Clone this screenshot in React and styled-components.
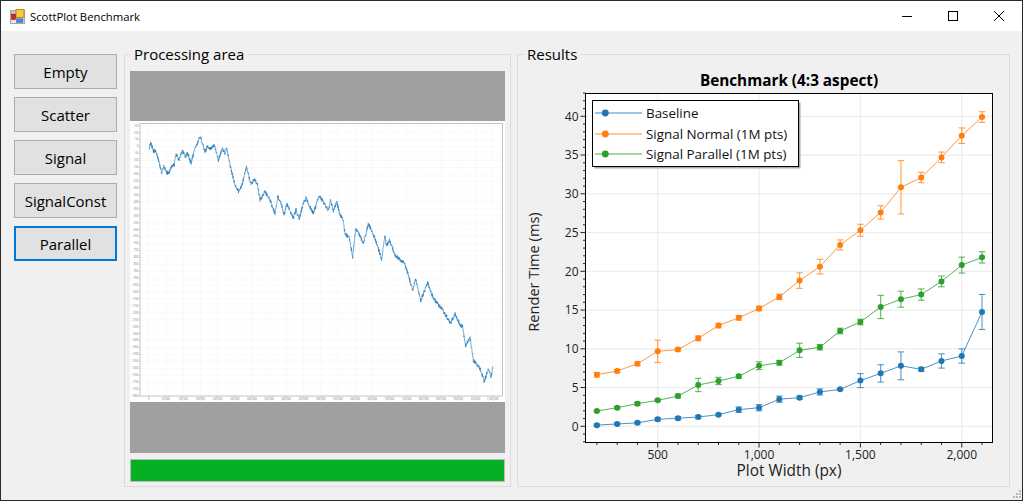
import React from 'react';
import styled, { createGlobalStyle } from 'styled-components';

const FONT = '"Open Sans", "Noto Sans", "Liberation Sans", sans-serif';

const GlobalStyle = createGlobalStyle`
  html, body {
    margin: 0;
    padding: 0;
    background: #f0f0f0;
  }
  body {
    font-family: ${FONT};
  }
`;

const Window = styled.div`
  position: relative;
  box-sizing: border-box;
  width: 1023px;
  height: 501px;
  border: 1px solid #2b2b2b;
  background: #f0f0f0;
  overflow: hidden;
`;

const TitleBar = styled.header`
  display: flex;
  align-items: center;
  height: 30px;
  padding-left: 9px;
  background: #fff;
`;

const AppIcon = styled.svg`
  width: 15px;
  height: 15px;
  margin-right: 5px;
`;

const WindowTitle = styled.span`
  flex: 1;
  font-size: 11.3px;
  color: #000;
`;

const CaptionButton = styled.div`
  display: flex;
  align-items: center;
  justify-content: center;
  width: 46px;
  height: 30px;
`;

const Body = styled.main`
  display: flex;
  align-items: flex-start;
  padding: 12px 0 0 13px;
`;

const Sidebar = styled.nav`
  display: flex;
  flex-direction: column;
  gap: 8px;
  width: 103px;
  margin: 11px 7px 0 0;
`;

const Button = styled.button`
  box-sizing: border-box;
  width: 103px;
  height: 35px;
  padding: 0;
  border: ${(p) => (p.$focused ? '2px solid #0078d7' : '1px solid #adadad')};
  background: #e1e1e1;
  font-family: ${FONT};
  font-size: 15px;
  color: #000;
`;

const GroupBox = styled.fieldset`
  box-sizing: border-box;
  width: ${(p) => p.$width}px;
  height: 444px;
  min-width: 0;
  margin: 0 ${(p) => p.$gap || 0}px 0 0;
  padding: 6px 5px 0;
  border: 1px solid #dcdcdc;
`;

const GroupLegend = styled.legend`
  margin-left: 1px;
  padding: 0 3px;
  font-size: 15px;
  line-height: 22px;
  color: #000;
`;

const GreyBand = styled.div`
  height: ${(p) => p.$height}px;
  background: #a0a0a0;
`;

const PictureBox = styled.div`
  height: 281px;
  background: #fff;
`;

const TraceSvg = styled.svg`
  display: block;
  width: 375px;
  height: 281px;
`;

const ProgressBar = styled.div`
  box-sizing: border-box;
  height: 23px;
  margin-top: 6px;
  border: 1px solid #bcbcbc;
  background: #06b025;
`;

const ChartSvg = styled.svg`
  display: block;
  width: 490px;
  height: 415px;
  margin: -5px 0 0 -5px;
  font-family: ${FONT};
`;

const SizeGrip = styled.svg`
  position: absolute;
  right: 1px;
  bottom: 2px;
  width: 9px;
  height: 9px;
`;

// rough hand-read path of the random walk, in page pixels
const fromZoom = (pts, ox, oy) => pts.map(([x, y]) => [ox + x / 3, oy + y / 3]);
const WALK = [
  ...fromZoom([[72,105],[77,80],[85,110],[92,105],[100,135],[110,175],[116,155],[130,178],[140,155],[148,150],[153,115],[162,135],[172,108],[182,125],[188,115],[198,145],[210,100],[222,72],[228,70],[240,112],[248,93],[255,100],[268,90],[280,135],[292,100],[300,115],[305,98],[315,150],[325,190],[332,215],[342,232],[352,205],[365,155],[378,210],[388,190],[398,210],[405,255],[420,230],[435,255],[450,295],[458,245],[467,260],[478,300],[485,265],[505,310],[513,285],[523,312],[535,262],[543,250],[553,270],[565,295],[580,250]], 125, 115),
  ...fromZoom([[0,245],[25,285],[32,255],[40,288],[50,260],[60,300],[68,310],[75,355],[88,370],[98,425],[107,342],[120,362],[130,388],[145,325],[165,370],[185,432],[195,362],[200,395],[208,375],[225,420]], 320, 115),
  ...fromZoom([[240,0],[252,5],[268,55],[278,90],[287,55],[302,122],[315,90],[323,68],[338,110],[348,125],[368,150],[392,190],[405,160],[420,195],[428,200],[436,258],[450,232],[460,300],[480,325],[493,365],[505,325],[513,352],[520,312]], 320, 260),
];

const buildTrace = () => {
  let seed = 17;
  const rand = () => {
    seed = (seed * 16807) % 2147483647;
    return seed / 2147483647 - 0.5;
  };
  const out = [];
  for (let i = 0; i < WALK.length - 1; i++) {
    const [x0, y0] = WALK[i];
    const [x1, y1] = WALK[i + 1];
    const steps = Math.max(3, Math.round(Math.abs(x1 - x0) / 0.2));
    for (let s = 0; s < steps; s++) {
      const t = s / steps;
      out.push(`${(x0 + (x1 - x0) * t).toFixed(2)},${(y0 + (y1 - y0) * t + rand() * 4).toFixed(2)}`);
    }
  }
  return out.join(' ');
};
const TRACE = buildTrace();

const SMALL_Y = Array.from({ length: 40 }, (_, i) => 150 - i * 50);
const SMALL_X = Array.from({ length: 21 }, (_, i) => i * 50000);
const smallY = (i) => 125.7 + i * 6.93;
const smallX = (i) => 148.7 + i * 17.2;

const TracePlot = () => (
  <TraceSvg viewBox="130 121 375 281">
    <defs>
      <filter id="soft" x="-5%" y="-5%" width="110%" height="110%">
        <feGaussianBlur stdDeviation="0.25" />
      </filter>
    </defs>
    {SMALL_Y.map((v, i) => (
      <g key={v}>
        <line x1="140" x2="502.5" y1={smallY(i)} y2={smallY(i)} stroke="#f8f8f8" strokeWidth="0.8" />
        <line x1="138.6" x2="140" y1={smallY(i)} y2={smallY(i)} stroke="#999" strokeWidth="0.5" />
        <text x="138.2" y={smallY(i) + 0.9} fontSize="2.6" textAnchor="end" fill="#777" fontFamily={FONT}>{v}</text>
      </g>
    ))}
    {SMALL_X.map((v, i) => (
      <g key={v}>
        <line x1={smallX(i)} x2={smallX(i)} y1="123.5" y2="396" stroke="#f8f8f8" strokeWidth="0.8" />
        <line x1={smallX(i)} x2={smallX(i)} y1="396" y2="397.4" stroke="#999" strokeWidth="0.5" />
        <text x={smallX(i)} y="399.8" fontSize="2.6" textAnchor="middle" fill="#777" fontFamily={FONT}>{v.toLocaleString('en-US')}</text>
      </g>
    ))}
    <rect x="140" y="123.5" width="362.5" height="272.5" fill="none" stroke="#c4c4c4" strokeWidth="1" />
    <polyline points={TRACE} fill="none" stroke="#1f77b4" strokeWidth="0.7" strokeOpacity="0.85" filter="url(#soft)" />
  </TraceSvg>
);

const px = (v) => 657.7 + (v - 500) * 0.2027;
const py = (v) => 426.3 - v * 7.75;

const SERIES = [
  {
    name: 'Baseline',
    color: '#1f77b4',
    legendY: 113,
    values: [0.15, 0.3, 0.45, 0.9, 1.05, 1.2, 1.5, 2.15, 2.4, 3.5, 3.7, 4.43, 4.77, 5.9, 6.83, 7.8, 7.35, 8.43, 9.07, 14.75],
    errors: [0.15, 0.15, 0.15, 0.2, 0.2, 0.2, 0.15, 0.35, 0.4, 0.4, 0.2, 0.4, 0.1, 0.9, 1.12, 1.8, 0.25, 0.92, 0.92, 2.26],
  },
  {
    name: 'Signal Normal (1M pts)',
    color: '#ff7f0e',
    legendY: 134,
    values: [6.66, 7.13, 8.08, 9.67, 9.9, 11.35, 13, 14, 15.2, 16.7, 18.8, 20.6, 23.4, 25.3, 27.6, 30.84, 32.1, 34.7, 37.5, 39.9],
    errors: [0.3, 0.2, 0.25, 1.44, 0.2, 0.3, 0.3, 0.3, 0.3, 0.35, 1, 0.95, 0.65, 0.77, 0.86, 3.44, 0.67, 0.69, 1, 0.69],
  },
  {
    name: 'Signal Parallel (1M pts)',
    color: '#2ca02c',
    legendY: 154,
    values: [1.97, 2.4, 2.92, 3.35, 3.9, 5.33, 5.85, 6.45, 7.82, 8.2, 9.8, 10.2, 12.3, 13.46, 15.4, 16.4, 17, 18.7, 20.8, 21.8],
    errors: [0.12, 0.15, 0.22, 0.15, 0.25, 0.86, 0.47, 0.25, 0.5, 0.3, 0.92, 0.35, 0.36, 0.36, 1.5, 1.03, 0.73, 0.7, 1.03, 0.73],
  },
];

const WIDTHS = Array.from({ length: 20 }, (_, i) => 200 + i * 100);
const AXIS = { left: 585.5, right: 992.5, top: 93.5, bottom: 442.5 };
const tickColor = '#111';

const Series = ({ s }) => (
  <g>
    <polyline
      points={s.values.map((v, i) => `${px(WIDTHS[i])},${py(v)}`).join(' ')}
      fill="none"
      stroke={s.color}
      strokeOpacity="0.8"
      strokeWidth="1"
    />
    {s.values.map((v, i) => {
      const x = px(WIDTHS[i]);
      const top = py(v + s.errors[i]);
      const bottom = py(v - s.errors[i]);
      return (
        <g key={WIDTHS[i]} stroke={s.color} strokeOpacity="0.75" strokeWidth="1.1">
          <line x1={x} x2={x} y1={top} y2={bottom} />
          <line x1={x - 3.3} x2={x + 3.3} y1={top} y2={top} />
          <line x1={x - 3.3} x2={x + 3.3} y1={bottom} y2={bottom} />
          <circle cx={x} cy={py(v)} r="3" fill={s.color} stroke="none" />
        </g>
      );
    })}
  </g>
);

const Chart = () => {
  const yTicks = Array.from({ length: 46 }, (_, i) => i - 2);
  const xTicks = Array.from({ length: 20 }, (_, i) => 200 + i * 100);
  return (
    <ChartSvg viewBox="518 66 490 415">
      <rect x={AXIS.left} y={AXIS.top} width={AXIS.right - AXIS.left} height={AXIS.bottom - AXIS.top} fill="#fff" />
      {[0, 5, 10, 15, 20, 25, 30, 35, 40].map((v) => (
        <line key={v} x1={AXIS.left} x2={AXIS.right} y1={py(v)} y2={py(v)} stroke="#ededed" strokeWidth="1.2" />
      ))}
      {[500, 1000, 1500, 2000].map((v) => (
        <line key={v} x1={px(v)} x2={px(v)} y1={AXIS.top} y2={AXIS.bottom} stroke="#ededed" strokeWidth="1.2" />
      ))}
      {SERIES.map((s) => (
        <Series key={s.name} s={s} />
      ))}
      <rect x={AXIS.left} y={AXIS.top} width={AXIS.right - AXIS.left} height={AXIS.bottom - AXIS.top} fill="none" stroke="#000" strokeWidth="1" />

      {yTicks.map((v) => (
        <line key={v} x1={AXIS.left - (v % 5 === 0 ? 5 : 2.5)} x2={AXIS.left} y1={py(v)} y2={py(v)} stroke={tickColor} strokeWidth="0.9" />
      ))}
      {[0, 5, 10, 15, 20, 25, 30, 35, 40].map((v) => (
        <text key={v} x="578.5" y={py(v) + 4.3} fontSize="12" textAnchor="end" fill="#222">{v}</text>
      ))}
      {xTicks.map((v) => (
        <line key={v} x1={px(v)} x2={px(v)} y1={AXIS.bottom} y2={AXIS.bottom + (v % 500 === 0 ? 5 : 2.5)} stroke={tickColor} strokeWidth="0.9" />
      ))}
      {[500, 1000, 1500, 2000].map((v) => (
        <text key={v} x={px(v)} y="459" fontSize="12" textAnchor="middle" fill="#222">{v.toLocaleString('en-US')}</text>
      ))}

      <text x="789" y="86" fontSize="15.3" fontWeight="700" textAnchor="middle" fill="#000">Benchmark (4:3 aspect)</text>
      <text x="789" y="476" fontSize="15.4" textAnchor="middle" fill="#222">Plot Width (px)</text>
      <text transform="translate(539 272) rotate(-90)" fontSize="14.6" textAnchor="middle" fill="#222">Render Time (ms)</text>

      <rect x="594.5" y="102.5" width="206" height="66" fill="#a8a8a8" />
      <rect x="592.5" y="100.5" width="206" height="66" fill="#fff" stroke="#000" strokeWidth="1" />
      {SERIES.map((s) => (
        <g key={s.name}>
          <line x1="595" x2="642" y1={s.legendY} y2={s.legendY} stroke={s.color} strokeOpacity="0.85" strokeWidth="1.1" />
          <circle cx="605.3" cy={s.legendY} r="3.4" fill={s.color} />
          <text x="646" y={s.legendY + 4.5} fontSize="13.4" fill="#111">{s.name}</text>
        </g>
      ))}
    </ChartSvg>
  );
};

const App = () => (
  <Window>
    <GlobalStyle />
    <TitleBar>
      <AppIcon viewBox="0 0 15 15">
        <rect x="0.5" y="1.5" width="14" height="13" fill="#e8e8e8" stroke="#a9a9a9" />
        <rect x="1" y="2" width="13" height="2" fill="#b9c9de" />
        <rect x="6" y="0.5" width="8" height="8" fill="#f8c93c" stroke="#a87a10" strokeWidth="0.8" />
        <rect x="1.5" y="5" width="4" height="5.5" fill="#d42a22" stroke="#7e1a16" strokeWidth="0.6" />
        <rect x="6.5" y="9.8" width="6.5" height="3.6" fill="#4f86dc" stroke="#2c5aa6" strokeWidth="0.5" />
      </AppIcon>
      <WindowTitle>ScottPlot Benchmark</WindowTitle>
      <CaptionButton>
        <svg width="10" height="10" viewBox="0 0 10 10"><line x1="0" x2="10" y1="5.5" y2="5.5" stroke="#000" /></svg>
      </CaptionButton>
      <CaptionButton>
        <svg width="10" height="10" viewBox="0 0 10 10"><rect x="0.5" y="0.5" width="9" height="9" fill="none" stroke="#000" /></svg>
      </CaptionButton>
      <CaptionButton>
        <svg width="10" height="10" viewBox="0 0 10 10"><path d="M0 0L10 10M10 0L0 10" stroke="#000" fill="none" /></svg>
      </CaptionButton>
    </TitleBar>
    <Body>
      <Sidebar>
        <Button>Empty</Button>
        <Button>Scatter</Button>
        <Button>Signal</Button>
        <Button>SignalConst</Button>
        <Button $focused>Parallel</Button>
      </Sidebar>
      <GroupBox $width={387} $gap={6}>
        <GroupLegend>Processing area</GroupLegend>
        <GreyBand $height={50} />
        <PictureBox>
          <TracePlot />
        </PictureBox>
        <GreyBand $height={51} />
        <ProgressBar />
      </GroupBox>
      <GroupBox $width={493}>
        <GroupLegend>Results</GroupLegend>
        <Chart />
      </GroupBox>
    </Body>
    <SizeGrip viewBox="0 0 9 9">
      <g fill="#b8b8b8">
        <rect x="7" y="1" width="2" height="2" />
        <rect x="4" y="4" width="2" height="2" />
        <rect x="7" y="4" width="2" height="2" />
        <rect x="1" y="7" width="2" height="2" />
        <rect x="4" y="7" width="2" height="2" />
        <rect x="7" y="7" width="2" height="2" />
      </g>
    </SizeGrip>
  </Window>
);

export default App;
